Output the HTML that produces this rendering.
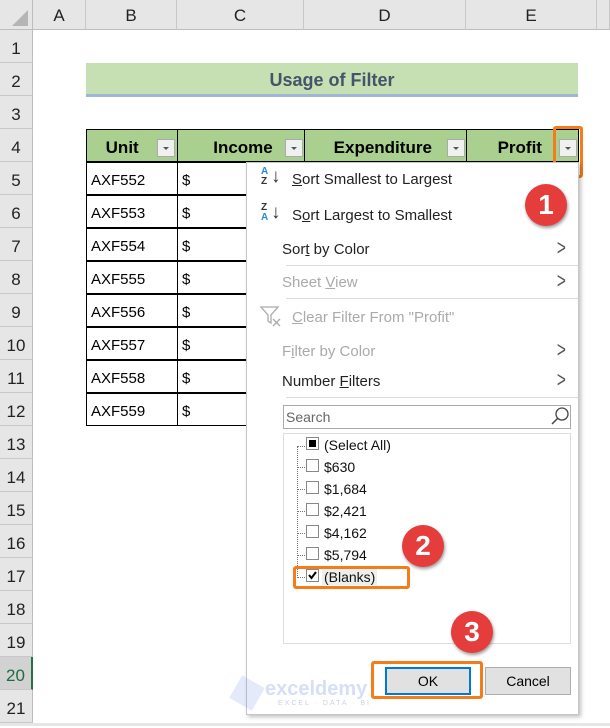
<!DOCTYPE html>
<html><head><style>
*{box-sizing:border-box;margin:0;padding:0}
body{width:610px;height:726px;overflow:hidden;background:#fff;font-family:"Liberation Sans",Calibri,sans-serif;position:relative}
.a{position:absolute}
.ch{top:0;height:30px;background:#e6e6e6;border-right:1px solid #c8c8c8;border-bottom:1px solid #bdbdbd;text-align:center;line-height:32px;font-size:17px;color:#222}
.rh{left:0;width:33px;height:33px;background:#e6e6e6;border-bottom:1px solid #c8c8c8;border-right:1px solid #bdbdbd;text-align:center;line-height:38px;font-size:17px;color:#222}
.cell{height:33px;border:1px solid #000;font-size:15px;line-height:35px;padding-left:4px;color:#000}
.hd{background:#a9d08e;font-weight:bold;font-size:17px;text-align:center}
.dd{position:absolute;width:18px;height:18px;top:9px;border:1px solid #aaa;background:#f0f0f0}
.dd:after{content:"";position:absolute;left:5px;top:7px;border-left:3px solid transparent;border-right:3px solid transparent;border-top:3px solid #555}
.mi{left:282px;font-size:15px;color:#222}
.dis{color:#aaa}
.arr{left:555px;font-size:22px;color:#555;transform:scaleX(.7)}
.sep{left:286px;width:292px;height:1px;background:#ddd}
.cb{left:306px;width:13px;height:13px;border:1px solid #888;background:#fff}
.lt{left:324px;font-size:14px;color:#111}
.circ{width:42px;height:42px;border-radius:50%;background:#e53c3c;color:#fff;font-size:28px;text-align:center;line-height:42px;font-weight:bold;box-shadow:1px 2px 3px rgba(0,0,0,.4)}
.ob{border:3px solid #f57c18;border-radius:3px}
</style></head><body>
<div class="a" style="left:0;top:0;width:33px;height:30px;background:#e6e6e6;border-right:1px solid #bdbdbd;border-bottom:1px solid #bdbdbd"><div class="a" style="left:12px;top:10px;border-left:16px solid transparent;border-bottom:16px solid #b5b5b5"></div></div>
<div class="a ch" style="left:33px;width:53px">A</div>
<div class="a ch" style="left:86px;width:91px">B</div>
<div class="a ch" style="left:177px;width:127px">C</div>
<div class="a ch" style="left:304px;width:162px">D</div>
<div class="a ch" style="left:466px;width:131px">E</div>
<div class="a ch" style="left:597px;width:13px"></div>
<div class="a rh" style="top:30px">1</div><div class="a rh" style="top:63px">2</div><div class="a rh" style="top:96px">3</div><div class="a rh" style="top:129px">4</div><div class="a rh" style="top:162px">5</div><div class="a rh" style="top:195px">6</div><div class="a rh" style="top:228px">7</div><div class="a rh" style="top:261px">8</div><div class="a rh" style="top:294px">9</div><div class="a rh" style="top:327px">10</div><div class="a rh" style="top:360px">11</div><div class="a rh" style="top:393px">12</div><div class="a rh" style="top:426px">13</div><div class="a rh" style="top:459px">14</div><div class="a rh" style="top:492px">15</div><div class="a rh" style="top:525px">16</div><div class="a rh" style="top:558px">17</div><div class="a rh" style="top:591px">18</div><div class="a rh" style="top:624px">19</div><div class="a rh" style="top:657px;background:#d2d2d2;color:#1e6b41;border-right:2px solid #217346">20</div><div class="a rh" style="top:690px">21</div>
<div class="a" style="left:0;top:723px;width:610px;height:3px;background:#e6e6e6"></div>

<div class="a" style="left:86px;top:63px;width:492px;height:34px;background:#c6e0b4;border-bottom:3px solid #9eb6d8;text-align:center;line-height:34px;font-weight:bold;font-size:18px;color:#44546a">Usage of Filter</div>

<div class="a cell hd" style="left:86px;top:129px;width:92px">Unit&nbsp;&nbsp;&nbsp;&nbsp;&nbsp;<span class="dd" style="left:70px"></span></div>
<div class="a cell hd" style="left:177px;top:129px;width:128px">Income<span class="dd" style="left:107px"></span></div>
<div class="a cell hd" style="left:304px;top:129px;width:163px">Expenditure&nbsp;&nbsp;<span class="dd" style="left:142px"></span></div>
<div class="a cell hd" style="left:466px;top:129px;width:113px">Profit&nbsp;&nbsp;<span class="dd" style="left:92px"></span></div>
<div class="a cell" style="left:86px;top:162px;width:92px">AXF552</div><div class="a cell" style="left:177px;top:162px;width:128px">$</div>
<div class="a cell" style="left:86px;top:195px;width:92px">AXF553</div><div class="a cell" style="left:177px;top:195px;width:128px">$</div>
<div class="a cell" style="left:86px;top:228px;width:92px">AXF554</div><div class="a cell" style="left:177px;top:228px;width:128px">$</div>
<div class="a cell" style="left:86px;top:261px;width:92px">AXF555</div><div class="a cell" style="left:177px;top:261px;width:128px">$</div>
<div class="a cell" style="left:86px;top:294px;width:92px">AXF556</div><div class="a cell" style="left:177px;top:294px;width:128px">$</div>
<div class="a cell" style="left:86px;top:327px;width:92px">AXF557</div><div class="a cell" style="left:177px;top:327px;width:128px">$</div>
<div class="a cell" style="left:86px;top:360px;width:92px">AXF558</div><div class="a cell" style="left:177px;top:360px;width:128px">$</div>
<div class="a cell" style="left:86px;top:393px;width:92px">AXF559</div><div class="a cell" style="left:177px;top:393px;width:128px">$</div>
<div class="a" style="left:578px;top:162px;width:1px;height:265px;background:#000"></div>
<div class="a ob" style="left:553px;top:126px;width:30px;height:52px"></div>

<!-- menu -->
<div class="a" style="left:246px;top:162px;width:333px;height:553px;background:#fff;border:1px solid #c6c6c6;box-shadow:2px 2px 4px rgba(0,0,0,.25)"></div>
<div class="a" style="left:261px;top:167px;font-size:10px;line-height:10px;color:#2a8ad4;font-weight:bold">A<br><span style="color:#333">Z</span></div>
<div class="a" style="left:271px;top:166px;font-size:19px;color:#333">↓</div>
<div class="a mi" style="left:292px;top:171px"><u>S</u>ort Smallest to Largest</div>
<div class="a" style="left:261px;top:203px;font-size:10px;line-height:10px;color:#333;font-weight:bold">Z<br><span style="color:#2a8ad4">A</span></div>
<div class="a" style="left:271px;top:202px;font-size:19px;color:#333">↓</div>
<div class="a mi" style="left:292px;top:207px">S<u>o</u>rt Largest to Smallest</div>
<div class="a mi" style="top:241px">Sor<u>t</u> by Color</div><div class="a arr" style="top:235px">&gt;</div>
<div class="a sep" style="top:265px"></div>
<div class="a mi dis" style="top:274px">Sheet <u>V</u>iew</div><div class="a arr dis" style="top:268px">&gt;</div>
<div class="a sep" style="top:298px"></div>
<svg class="a" style="left:260px;top:305px" width="22" height="22"><path d="M1 2H18L11 10V18L8 16V10Z" fill="none" stroke="#aaa" stroke-width="1.3"/><path d="M13 14L20 21M20 14L13 21" stroke="#aaa" stroke-width="1.3"/></svg>
<div class="a mi dis" style="left:292px;top:309px"><u>C</u>lear Filter From "Profit"</div>
<div class="a mi dis" style="top:343px">F<u>i</u>lter by Color</div><div class="a arr dis" style="top:337px">&gt;</div>
<div class="a mi" style="top:373px">Number <u>F</u>ilters</div><div class="a arr" style="top:367px">&gt;</div>
<div class="a sep" style="top:397px"></div>
<div class="a" style="left:283px;top:405px;width:288px;height:24px;border:1px solid #aaa;font-size:14px;color:#666;padding-left:2px;line-height:22px">Search</div>
<svg class="a" style="left:550px;top:406px" width="20" height="20"><circle cx="12" cy="8" r="6" fill="none" stroke="#444" stroke-width="1.3"/><path d="M8 12L2 18" stroke="#444" stroke-width="1.5"/></svg>
<div class="a" style="left:283px;top:433px;width:288px;height:211px;border:1px solid #ddd"></div>
<div class="a" style="left:297px;top:446px;width:0;height:132px;border-left:1px dotted #777"></div>
<div class="a" style="left:297px;top:446px;width:8px;border-top:1px dotted #777"></div><div class="a" style="left:297px;top:467px;width:8px;border-top:1px dotted #777"></div><div class="a" style="left:297px;top:489px;width:8px;border-top:1px dotted #777"></div><div class="a" style="left:297px;top:511px;width:8px;border-top:1px dotted #777"></div><div class="a" style="left:297px;top:533px;width:8px;border-top:1px dotted #777"></div><div class="a" style="left:297px;top:555px;width:8px;border-top:1px dotted #777"></div><div class="a" style="left:297px;top:577px;width:8px;border-top:1px dotted #777"></div>
<div class="a cb" style="top:437px"><div style="margin:2px;width:7px;height:7px;background:#000"></div></div><div class="a lt" style="top:437px">(Select All)</div>
<div class="a cb" style="top:459px"></div><div class="a lt" style="top:459px">$630</div>
<div class="a cb" style="top:481px"></div><div class="a lt" style="top:481px">$1,684</div>
<div class="a cb" style="top:503px"></div><div class="a lt" style="top:503px">$2,421</div>
<div class="a cb" style="top:525px"></div><div class="a lt" style="top:525px">$4,162</div>
<div class="a cb" style="top:547px"></div><div class="a lt" style="top:547px">$5,794</div>
<div class="a cb" style="top:569px"><svg width="11" height="11" style="display:block"><path d="M2 5L4.5 8L9 2" fill="none" stroke="#000" stroke-width="2"/></svg></div><div class="a lt" style="top:569px;background:#eee;padding:0 2px;left:322px">(Blanks)</div>
<div class="a ob" style="left:293px;top:566px;width:117px;height:23px"></div>
<div class="a" style="left:385px;top:667px;width:86px;height:28px;background:#e1e1e1;border:2px solid #0078d7;text-align:center;line-height:24px;font-size:14px">OK</div>
<div class="a" style="left:485px;top:667px;width:86px;height:28px;background:#e1e1e1;border:1px solid #adadad;text-align:center;line-height:26px;font-size:14px">Cancel</div>
<div class="a ob" style="left:371px;top:661px;width:112px;height:38px"></div>
<div class="a" style="left:265px;top:678px;font-size:20px;font-weight:bold;color:rgba(120,150,230,.3)">exceldemy</div>
<div class="a" style="left:278px;top:700px;font-size:7px;letter-spacing:2px;color:rgba(120,140,180,.4)">EXCEL · DATA · BI</div>
<div class="a" style="left:234px;top:680px;width:26px;height:26px;background:rgba(120,150,230,.2);transform:rotate(30deg)"></div>

<div class="a circ" style="left:525px;top:184px">1</div>
<div class="a circ" style="left:402px;top:525px">2</div>
<div class="a circ" style="left:451px;top:611px">3</div>
</body></html>
